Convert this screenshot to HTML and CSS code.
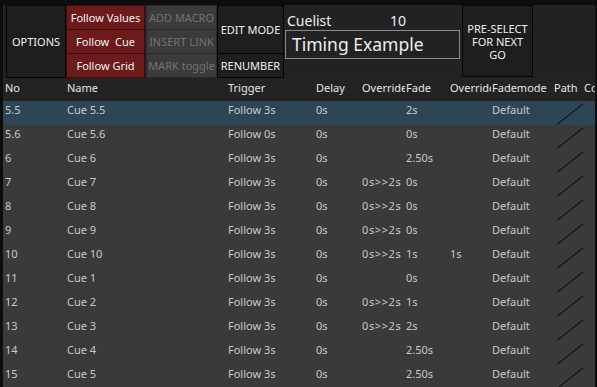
FILE: index.html
```html
<!DOCTYPE html>
<html>
<head>
<meta charset="utf-8">
<link rel="stylesheet" href="styles.css">
</head>
<body>
<div class="app">
  <div class="toolbar">
    <div class="btn opt">OPTIONS</div>
    <div class="col red">
      <div class="btn r">Follow Values</div>
      <div class="btn r">Follow&nbsp; Cue</div>
      <div class="btn r">Follow Grid</div>
    </div>
    <div class="col gray">
      <div class="btn g">ADD MACRO</div>
      <div class="btn g">INSERT LINK</div>
      <div class="btn g">MARK toggle</div>
    </div>
    <div class="col edit">
      <div class="btn e tall">EDIT MODE</div>
      <div class="btn e">RENUMBER</div>
    </div>
    <div class="cuelist">
      <div class="cl-head"><span class="cl-label">Cuelist</span><span class="cl-num">10</span></div>
      <div class="cl-name">Timing Example</div>
    </div>
    <div class="btn pre">PRE-SELECT<br>FOR NEXT<br>GO</div>
  </div>
  <div class="table">
    <div class="row head">
      <div>No</div><div>Name</div><div>Trigger</div><div>Delay</div><div>Override</div><div>Fade</div><div>Override</div><div>Fademode</div><div>Path</div><div>Comment</div>
    </div>
    <div class="row sel"><div>5.5</div><div>Cue 5.5</div><div>Follow 3s</div><div>0s</div><div></div><div>2s</div><div></div><div>Default</div><div class="path"><svg width="30" height="24"><line x1="4" y1="23.5" x2="30" y2="3" /></svg></div><div></div></div>
    <div class="row"><div>5.6</div><div>Cue 5.6</div><div>Follow 0s</div><div>0s</div><div></div><div>0s</div><div></div><div>Default</div><div class="path"><svg width="30" height="24"><line x1="4" y1="23.5" x2="30" y2="3" /></svg></div><div></div></div>
    <div class="row"><div>6</div><div>Cue 6</div><div>Follow 3s</div><div>0s</div><div></div><div>2.50s</div><div></div><div>Default</div><div class="path"><svg width="30" height="24"><line x1="4" y1="23.5" x2="30" y2="3" /></svg></div><div></div></div>
    <div class="row"><div>7</div><div>Cue 7</div><div>Follow 3s</div><div>0s</div><div class="ov">0s&gt;&gt;2s</div><div>0s</div><div></div><div>Default</div><div class="path"><svg width="30" height="24"><line x1="4" y1="23.5" x2="30" y2="3" /></svg></div><div></div></div>
    <div class="row"><div>8</div><div>Cue 8</div><div>Follow 3s</div><div>0s</div><div class="ov">0s&gt;&gt;2s</div><div>0s</div><div></div><div>Default</div><div class="path"><svg width="30" height="24"><line x1="4" y1="23.5" x2="30" y2="3" /></svg></div><div></div></div>
    <div class="row"><div>9</div><div>Cue 9</div><div>Follow 3s</div><div>0s</div><div class="ov">0s&gt;&gt;2s</div><div>0s</div><div></div><div>Default</div><div class="path"><svg width="30" height="24"><line x1="4" y1="23.5" x2="30" y2="3" /></svg></div><div></div></div>
    <div class="row"><div>10</div><div>Cue 10</div><div>Follow 3s</div><div>0s</div><div class="ov">0s&gt;&gt;2s</div><div>1s</div><div>1s</div><div>Default</div><div class="path"><svg width="30" height="24"><line x1="4" y1="23.5" x2="30" y2="3" /></svg></div><div></div></div>
    <div class="row"><div>11</div><div>Cue 1</div><div>Follow 3s</div><div>0s</div><div></div><div>0s</div><div></div><div>Default</div><div class="path"><svg width="30" height="24"><line x1="4" y1="23.5" x2="30" y2="3" /></svg></div><div></div></div>
    <div class="row"><div>12</div><div>Cue 2</div><div>Follow 3s</div><div>0s</div><div class="ov">0s&gt;&gt;2s</div><div>1s</div><div></div><div>Default</div><div class="path"><svg width="30" height="24"><line x1="4" y1="23.5" x2="30" y2="3" /></svg></div><div></div></div>
    <div class="row"><div>13</div><div>Cue 3</div><div>Follow 3s</div><div>0s</div><div class="ov">0s&gt;&gt;2s</div><div>2s</div><div></div><div>Default</div><div class="path"><svg width="30" height="24"><line x1="4" y1="23.5" x2="30" y2="3" /></svg></div><div></div></div>
    <div class="row"><div>14</div><div>Cue 4</div><div>Follow 3s</div><div>0s</div><div></div><div>2.50s</div><div></div><div>Default</div><div class="path"><svg width="30" height="24"><line x1="4" y1="23.5" x2="30" y2="3" /></svg></div><div></div></div>
    <div class="row"><div>15</div><div>Cue 5</div><div>Follow 3s</div><div>0s</div><div></div><div>2.50s</div><div></div><div>Default</div><div class="path"><svg width="30" height="24"><line x1="4" y1="23.5" x2="30" y2="3" /></svg></div><div></div></div>
  </div>
</div>
</body>
</html>
```
FILE: styles.css
```css
html, body {
  margin: 0;
  padding: 0;
  background: #0d0d0d;
  font-family: "Noto Sans", "Open Sans", sans-serif;
  font-size: 11px;
  color: #e8e8e8;
}
.app {
  margin: 5px 2px 0 3px;
  height: 382px;
  background: #222222;
  overflow: hidden;
}
.toolbar {
  display: flex;
  height: 73px;
  padding-left: 3px;
  box-sizing: border-box;
}
.btn {
  display: flex;
  align-items: center;
  justify-content: center;
  text-align: center;
  box-sizing: border-box;
  white-space: nowrap;
}
.opt {
  width: 60px;
  height: 73px;
  border: 1px solid #050505;
  background: #1e1e1e;
  color: #f0f0f0;
}
.col {
  display: flex;
  flex-direction: column;
}
.red {
  width: 79px;
  background: #3a0c0c;
}
.r {
  height: 24px;
  background: #6c1a1a;
  border: 1px solid #3d0b0b;
  border-top: none;
  color: #f2f2f2;
}
.r:first-child {
  border-top: 1px solid #3d0b0b;
  height: 25px;
}
.gray {
  width: 71px;
  margin-left: 1px;
}
.g {
  height: 24px;
  background: #3b3b3b;
  border: 1px solid #2b2b2b;
  border-top: none;
  color: #737373;
}
.g:first-child {
  border-top: 1px solid #2b2b2b;
  height: 25px;
}
.edit {
  width: 67px;
}
.e {
  height: 24px;
  border: 1px solid #050505;
  border-top: none;
  background: #1e1e1e;
  color: #f0f0f0;
}
.e.tall {
  height: 49px;
  border-top: 1px solid #050505;
}
.cuelist {
  width: 176px;
  padding-left: 1px;
  display: flex;
  flex-direction: column;
}
.cl-head {
  height: 25px;
  display: flex;
  align-items: flex-end;
  font-size: 14px;
  line-height: 18px;
  color: #eeeeee;
  padding-left: 2px;
}
.cl-label {
  width: 103px;
}
.cl-name {
  height: 29px;
  width: 175px;
  box-sizing: border-box;
  border: 1px solid #8a8a8a;
  font-size: 17.5px;
  line-height: 26px;
  padding-left: 6px;
  color: #eeeeee;
}
.pre {
  width: 71px;
  height: 72px;
  margin-left: 1px;
  border: 1px solid #050505;
  background: #1e1e1e;
  line-height: 13px;
  color: #f0f0f0;
}
.table {
  display: flex;
  flex-direction: column;
}
.row {
  display: grid;
  grid-template-columns: 63px 161px 88px 46px 44px 44px 42px 62px 30px 30px;
  height: 24px;
  background: #3a3a3a;
  color: #c9c9c9;
}
.row > div {
  overflow: hidden;
  white-space: nowrap;
  padding-left: 1px;
  line-height: 17px;
}
.row > div:first-child {
  padding-left: 2px;
}
.row.head {
  height: 23px;
  background: #232323;
  color: #e6e6e6;
}
.row.head > div {
  line-height: 17px;
  padding-top: 1px;
}
.row.sel {
  background: #2d4655;
}
.ov {
  letter-spacing: 0.6px;
}
.path {
  padding-left: 0 !important;
}
.path svg {
  display: block;
}
.path line {
  stroke: #050505;
  stroke-width: 1;
}
```
